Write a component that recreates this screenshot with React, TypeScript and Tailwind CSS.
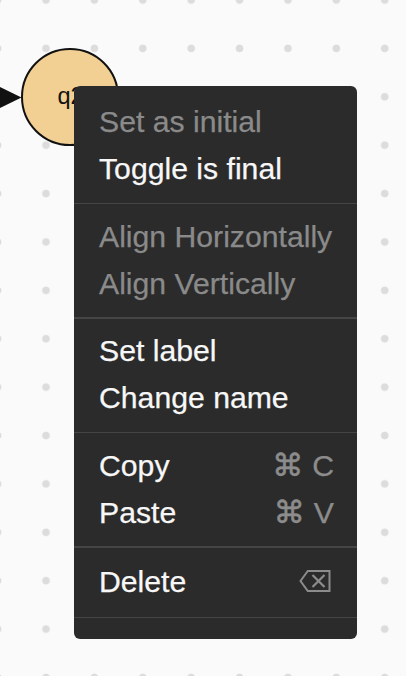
import React from "react";

const font = { fontFamily: '"Liberation Sans", Arial, sans-serif' };

function Item({
  label,
  disabled,
  right,
  tall,
}: {
  label: string;
  disabled?: boolean;
  right?: React.ReactNode;
  tall?: boolean;
}) {
  return (
    <div
      className={`flex items-center justify-between pl-[25px] pr-[23px] ${tall ? "h-[50px]" : "h-[47px]"} text-[30.2px] leading-[47px] [-webkit-text-stroke:0.25px_currentColor] ${disabled ? "text-[#8a8a8a]" : "text-[#f7f7f7]"}`}
    >
      <span>{label}</span>
      {right}
    </div>
  );
}

function Shortcut({ k }: { k: string }) {
  return (
    <span className="flex items-center text-[#8c8c8c]">
      <span
        className="text-[31px] leading-none mr-[9px] [-webkit-text-stroke:0.6px_#8c8c8c]"
        style={{ fontFamily: '"DejaVu Sans", sans-serif' }}
      >
        ⌘
      </span>
      <span>{k}</span>
    </span>
  );
}

function Sep() {
  return <div className="mt-[10.5px] mb-[8.5px] h-[1.5px] bg-[#454545]" />;
}

export default function App() {
  return (
    <div
      className="relative h-[676px] w-full overflow-hidden bg-[#fafafa] bg-[radial-gradient(circle,#dcdcdc_3.5px,transparent_4.2px)] bg-[length:48.4px_48.4px] bg-[position:21.8px_-24.2px]"
      style={font}
    >
      {/* arrow head */}
      <svg className="absolute left-0 top-[87px]" width="22" height="21" viewBox="0 0 22 21">
        <polygon points="0,0 21.5,10.5 0,21" fill="#111111" />
      </svg>
      {/* node */}
      <div className="absolute left-[21px] top-[48px] flex h-[98px] w-[98px] items-center justify-center rounded-full border-[2.5px] border-[#111111] bg-[#f2cf93] pl-[1px] text-[23.5px] text-[#111111]">
        q2
      </div>
      {/* context menu */}
      <div className="absolute left-[74px] top-[86px] w-[283px] rounded-[6px] bg-[#2b2b2b] pt-[12px] pb-[12px]">
        <Item label="Set as initial" disabled />
        <Item label="Toggle is final" />
        <Sep />
        <Item label="Align Horizontally" disabled />
        <Item label="Align Vertically" disabled />
        <Sep />
        <Item label="Set label" />
        <Item label="Change name" />
        <Sep />
        <Item label="Copy" right={<Shortcut k="C" />} />
        <Item label="Paste" right={<Shortcut k="V" />} />
        <Sep />
        <Item
          label="Delete"
          tall
          right={
            <svg className="mr-[3px]" width="32" height="22" viewBox="0 0 32 22" fill="none">
              <path
                d="M1.5 11 L8.8 1 H30.5 V21 H8.8 Z"
                stroke="#8c8c8c"
                strokeWidth="2"
                strokeLinejoin="miter"
              />
              <path d="M13.5 5 L25.5 17 M25.5 5 L13.5 17" stroke="#8c8c8c" strokeWidth="2.2" />
            </svg>
          }
        />
        <Sep />
      </div>
    </div>
  );
}
